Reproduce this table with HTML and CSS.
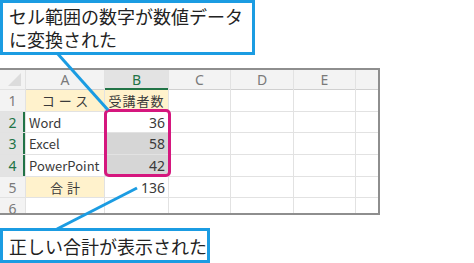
FILE: index.html
```html
<!DOCTYPE html>
<html lang="ja">
<head>
<meta charset="utf-8">
<link rel="stylesheet" href="styles.css">
</head>
<body>
<div class="page">
  <div class="callout top">セル範囲の数字が数値データ<br>に変換された</div>
  <div class="sheet">
    <div class="corner"><svg width="25" height="19" viewBox="0 0 25 19"><polygon points="21,3 21,16 8,16" fill="#dcdcdc"/></svg></div>
    <div class="ch">A</div>
    <div class="ch sel">B</div>
    <div class="ch">C</div>
    <div class="ch">D</div>
    <div class="ch">E</div>
    <div class="ch"></div>

    <div class="rh">1</div>
    <div class="c yellow center wide">コース</div>
    <div class="c yellow center">受講者数</div>
    <div class="c"></div><div class="c"></div><div class="c"></div><div class="c"></div>

    <div class="rh sel">2</div>
    <div class="c">Word</div>
    <div class="c num">36</div>
    <div class="c"></div><div class="c"></div><div class="c"></div><div class="c"></div>

    <div class="rh sel">3</div>
    <div class="c">Excel</div>
    <div class="c num gray">58</div>
    <div class="c"></div><div class="c"></div><div class="c"></div><div class="c"></div>

    <div class="rh sel">4</div>
    <div class="c">PowerPoint</div>
    <div class="c num gray">42</div>
    <div class="c"></div><div class="c"></div><div class="c"></div><div class="c"></div>

    <div class="rh">5</div>
    <div class="c yellow center wide">合計</div>
    <div class="c num">136</div>
    <div class="c"></div><div class="c"></div><div class="c"></div><div class="c"></div>

    <div class="rh">6</div>
    <div class="c"></div><div class="c"></div><div class="c"></div><div class="c"></div><div class="c"></div><div class="c"></div>
  </div>
  <div class="callout bottom">正しい合計が表示された</div>
  <div class="highlight"></div>
  <svg class="pointers" width="474" height="263" viewBox="0 0 474 263">
    <line x1="57" y1="53" x2="108" y2="110" stroke="#1b9ce2" stroke-width="3"/>
    <line x1="57" y1="229" x2="137" y2="188" stroke="#1b9ce2" stroke-width="3"/>
  </svg>
</div>
</body>
</html>
```

FILE: styles.css
```css
html, body {
  margin: 0;
  padding: 0;
  background: #ffffff;
}
.page {
  position: relative;
  width: 474px;
  height: 263px;
  overflow: hidden;
  font-family: "Noto Sans CJK JP", "Noto Sans", sans-serif;
}
.callout {
  box-sizing: border-box;
  border: 3px solid #1b9ce2;
  background: #ffffff;
  color: #222222;
  font-size: 18px;
  line-height: 23px;
  padding: 2px 0 0 6px;
  position: relative;
  z-index: 2;
}
.callout.top {
  width: 255px;
  height: 55px;
}
.callout.bottom {
  width: 210px;
  height: 35px;
  margin-top: 13px;
  padding-top: 3px;
  line-height: 24px;
}
.sheet {
  margin-top: 13px;
  width: 380px;
  box-sizing: border-box;
  display: grid;
  grid-template-columns: 25px 78px 63px 61px 62px 61px 22px;
  grid-template-rows: 19px 21px 20px 21px 21px 20px 15px;
  gap: 1px;
  background: #e2e2e2;
  border-top: 2px solid #8e8e8e;
  border-right: 2px solid #8e8e8e;
  border-bottom: 2px solid #8e8e8e;
  font-size: 13px;
  color: #3a3a3a;
}
.corner {
  background: #f3f3f3;
  line-height: 0;
}
.ch {
  background: #f3f3f3;
  color: #7a7a7a;
  font-family: "Noto Sans", sans-serif;
  font-size: 14px;
  text-align: center;
  line-height: 19px;
  border-bottom: 1px solid #d0d0d0;
  margin-bottom: -1px;
}
.ch.sel {
  background: #e3e3e3;
  color: #217346;
  border-bottom: 2px solid #217346;
}
.rh {
  background: #f3f3f3;
  color: #7a7a7a;
  font-family: "Noto Sans", sans-serif;
  font-size: 14px;
  text-align: center;
  line-height: 21px;
}
.rh.sel {
  background: #e3e3e3;
  color: #217346;
  box-shadow: inset -2px 0 0 #217346;
}
.c {
  background: #ffffff;
  line-height: 21px;
  padding: 0 3px;
  white-space: nowrap;
  overflow: hidden;
}
.yellow {
  background: #fff2cc;
}
.center {
  text-align: center;
  letter-spacing: 1px;
}
.center.wide {
  letter-spacing: 4px;
  text-indent: 4px;
}
.num {
  text-align: right;
  font-family: "Noto Sans", sans-serif;
  font-size: 14px;
}
.gray {
  background: #d6d6d6;
}
.highlight {
  position: absolute;
  left: 104px;
  top: 109px;
  width: 67px;
  height: 68px;
  box-sizing: border-box;
  border: 3px solid #d5177e;
  border-radius: 5px;
  z-index: 1;
}
.pointers {
  position: absolute;
  left: 0;
  top: 0;
  z-index: 3;
}
```
